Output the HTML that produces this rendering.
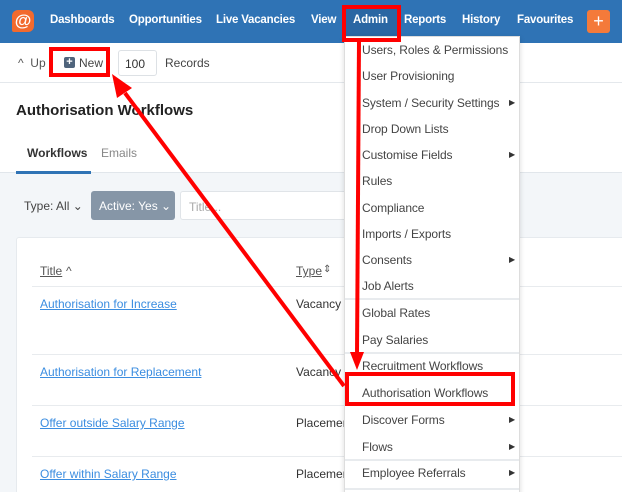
<!DOCTYPE html>
<html><head><style>
*{margin:0;padding:0;box-sizing:border-box}
html,body{width:622px;height:492px;overflow:hidden}
body{font-family:"Liberation Sans",sans-serif;background:#f3f6f9;position:relative;font-size:12px;color:#333}
.nav{position:absolute;left:0;top:0;width:622px;height:43px;background:#2f73b5;}
.nav span{position:absolute;top:14px;color:#fff;font-weight:bold;font-size:11.5px;letter-spacing:-0.2px}
.logo{position:absolute;left:12px;top:10px;width:22px;height:22px;background:#f26a2e;border-radius:6px 6px 6px 2px;color:#fff;font-weight:bold;font-size:17px;text-align:center;line-height:21px}
.plus{position:absolute;left:587px;top:10px;width:23px;height:23px;background:#f47a3a;border-radius:3px;color:#fff;font-size:18px;text-align:center;line-height:22px}
.tool{position:absolute;left:0;top:43px;width:622px;height:40px;background:#fff;border-bottom:1px solid #e4e8ec}
.hdr{position:absolute;left:0;top:83px;width:622px;height:90px;background:#fff;border-bottom:1px solid #e1e6eb}
.abs{position:absolute}
.menu{position:absolute;left:344px;top:36px;width:176px;height:460px;background:#fff;border:1px solid #ddd;box-shadow:0 2px 5px rgba(0,0,0,.15)}
.menu div{position:absolute;left:17px;font-size:12px;color:#444;letter-spacing:-0.1px}
.menu .ar{left:164px;font-size:8px;color:#333}
.menu hr{position:absolute;left:0;width:174px;border:0;border-top:2px solid #e8ebee}
.card{position:absolute;left:16px;top:237px;width:620px;height:270px;background:#fff;border:1px solid #e6eaee;border-radius:3px}
a{color:#3b8de0;text-decoration:underline;position:absolute;font-size:12px}
.row{position:absolute;left:32px;width:590px;border-top:1px solid #e8ebee}
</style></head><body>
<div class="nav">
<div class="logo">@</div>
<span style="left:50px">Dashboards</span>
<span style="left:129px">Opportunities</span>
<span style="left:216px">Live Vacancies</span>
<span style="left:311px">View</span>
<div class="abs" style="left:346px;top:6px;width:52px;height:32px;background:#2a66a3"></div>
<span style="left:353px">Admin</span>
<span style="left:404px">Reports</span>
<span style="left:462px">History</span>
<span style="left:517px">Favourites</span>
<div class="plus">+</div>
</div>
<div class="tool">
<div class="abs" style="left:18px;top:13px;color:#555">^&nbsp; Up</div>
<div class="abs" style="left:64px;top:14px;width:11px;height:11px;background:#4f647c;border-radius:2px;color:#fff;font-size:11px;line-height:10px;text-align:center;font-weight:bold">+</div>
<div class="abs" style="left:79px;top:13px;color:#444">New</div>
<div class="abs" style="left:118px;top:7px;width:39px;height:26px;border:1px solid #dde1e5;border-radius:3px;padding:6px 0 0 6px">100</div>
<div class="abs" style="left:165px;top:13px;color:#444">Records</div>
</div>
<div class="hdr">
<div class="abs" style="left:16px;top:19px;font-size:15px;font-weight:bold;color:#222">Authorisation Workflows</div>
<div class="abs" style="left:27px;top:63px;font-weight:bold;color:#333">Workflows</div>
<div class="abs" style="left:101px;top:63px;color:#888">Emails</div>
<div class="abs" style="left:16px;top:88px;width:75px;height:3px;background:#2f73b5"></div>
</div>
<div class="abs" style="left:24px;top:199px;color:#444">Type: All ⌄</div>
<div class="abs" style="left:91px;top:191px;width:84px;height:29px;background:#8696a7;border-radius:3px;color:#fff;padding:8px 0 0 8px">Active: Yes ⌄</div>
<div class="abs" style="left:180px;top:191px;width:200px;height:29px;background:#fff;border:1px solid #e0e4e8;border-radius:3px;padding:8px 0 0 8px;color:#aaa">Title...</div>
<div class="card"></div>
<a style="left:40px;top:264px;color:#555">Title</a><div class="abs" style="left:66px;top:264px;color:#555">^</div>
<a style="left:296px;top:264px;color:#555">Type</a><div class="abs" style="left:323px;top:264px;color:#555;font-size:10px">⇕</div>
<div class="row" style="top:286px"></div>
<a style="left:40px;top:297px">Authorisation for Increase</a><div class="abs" style="left:296px;top:297px">Vacancy</div>
<div class="row" style="top:354px"></div>
<a style="left:40px;top:365px">Authorisation for Replacement</a><div class="abs" style="left:296px;top:365px">Vacancy</div>
<div class="row" style="top:405px"></div>
<a style="left:40px;top:416px">Offer outside Salary Range</a><div class="abs" style="left:296px;top:416px">Placement</div>
<div class="row" style="top:456px"></div>
<a style="left:40px;top:467px">Offer within Salary Range</a><div class="abs" style="left:296px;top:467px">Placement</div>
<div class="menu">
<div style="top:6px">Users, Roles &amp; Permissions</div>
<div style="top:32px">User Provisioning</div>
<div style="top:59px">System / Security Settings</div><div class="ar" style="top:61px">▶</div>
<div style="top:85px">Drop Down Lists</div>
<div style="top:111px">Customise Fields</div><div class="ar" style="top:113px">▶</div>
<div style="top:137px">Rules</div>
<div style="top:164px">Compliance</div>
<div style="top:190px">Imports / Exports</div>
<div style="top:216px">Consents</div><div class="ar" style="top:218px">▶</div>
<div style="top:242px">Job Alerts</div>
<hr style="top:261px">
<div style="top:269px">Global Rates</div>
<div style="top:296px">Pay Salaries</div>
<hr style="top:315px">
<div style="top:322px">Recruitment Workflows</div>
<div style="top:349px">Authorisation Workflows</div>
<div style="top:376px">Discover Forms</div><div class="ar" style="top:378px">▶</div>
<div style="top:403px">Flows</div><div class="ar" style="top:405px">▶</div>
<hr style="top:422px">
<div style="top:429px">Employee Referrals</div><div class="ar" style="top:431px">▶</div>
<hr style="top:451px">
</div>
<svg class="abs" style="left:0;top:0" width="622" height="492">
<g fill="none" stroke="#f00" stroke-width="4">
<rect x="51" y="49" width="57" height="26"/>
<rect x="344" y="7" width="55" height="33"/>
<rect x="347" y="374" width="166" height="30"/>
</g>
<g stroke="#f00" stroke-width="4">
<line x1="359" y1="40" x2="357" y2="355"/>
<line x1="344" y1="386" x2="125" y2="93"/>
</g>
<polygon points="350,352 364,352 357,370" fill="#f00"/>
<polygon points="112,74 132,88 117,98" fill="#f00"/>
</svg>
</body></html>
